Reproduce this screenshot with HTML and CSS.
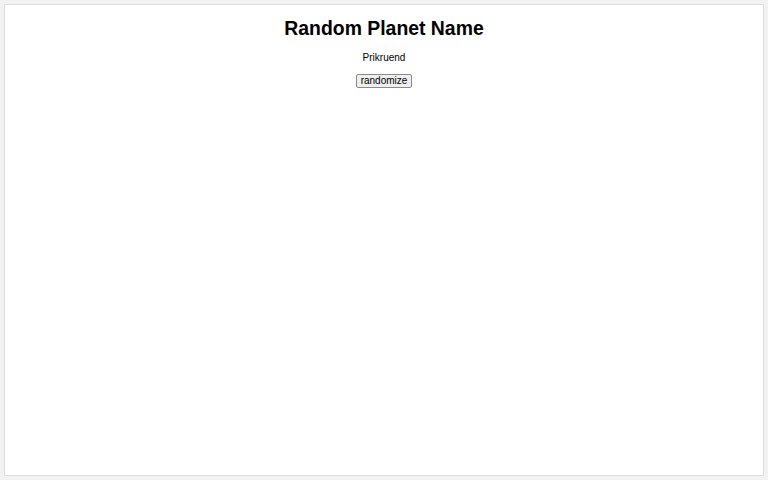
FILE: index.html
```html
<!DOCTYPE html>
<html lang="en">
<head>
<meta charset="utf-8">
<title>Random Planet Name</title>
<link rel="stylesheet" href="styles.css">
</head>
<body>
<main class="panel">
  <h1 class="title">Random Planet Name</h1>
  <p class="planet">Prikruend</p>
  <button class="randomize" type="button">randomize</button>
</main>
</body>
</html>
```

FILE: styles.css
```css
html, body {
  margin: 0;
  height: 100%;
}

body {
  background: #f2f2f2;
  padding: 4px;
  box-sizing: border-box;
  font-family: "Liberation Sans", Arial, sans-serif;
}

.panel {
  height: 100%;
  box-sizing: border-box;
  background: #ffffff;
  border: 1px solid #dcdcdc;
  display: flex;
  flex-direction: column;
  align-items: center;
  padding-top: 11px;
}

.title {
  margin: 0;
  font-size: 19.4px;
  font-weight: bold;
  line-height: 24px;
  color: #000;
}

.planet {
  margin: 12px 0 0;
  font-size: 10px;
  line-height: 12px;
  color: #000;
}

.randomize {
  margin-top: 10px;
  font-family: "Liberation Sans", Arial, sans-serif;
  font-size: 10px;
  line-height: 12px;
  padding: 0 4px;
  background: #efefef;
  border: 1px solid #8a8a8a;
  border-radius: 2px;
  color: #000;
}
```
